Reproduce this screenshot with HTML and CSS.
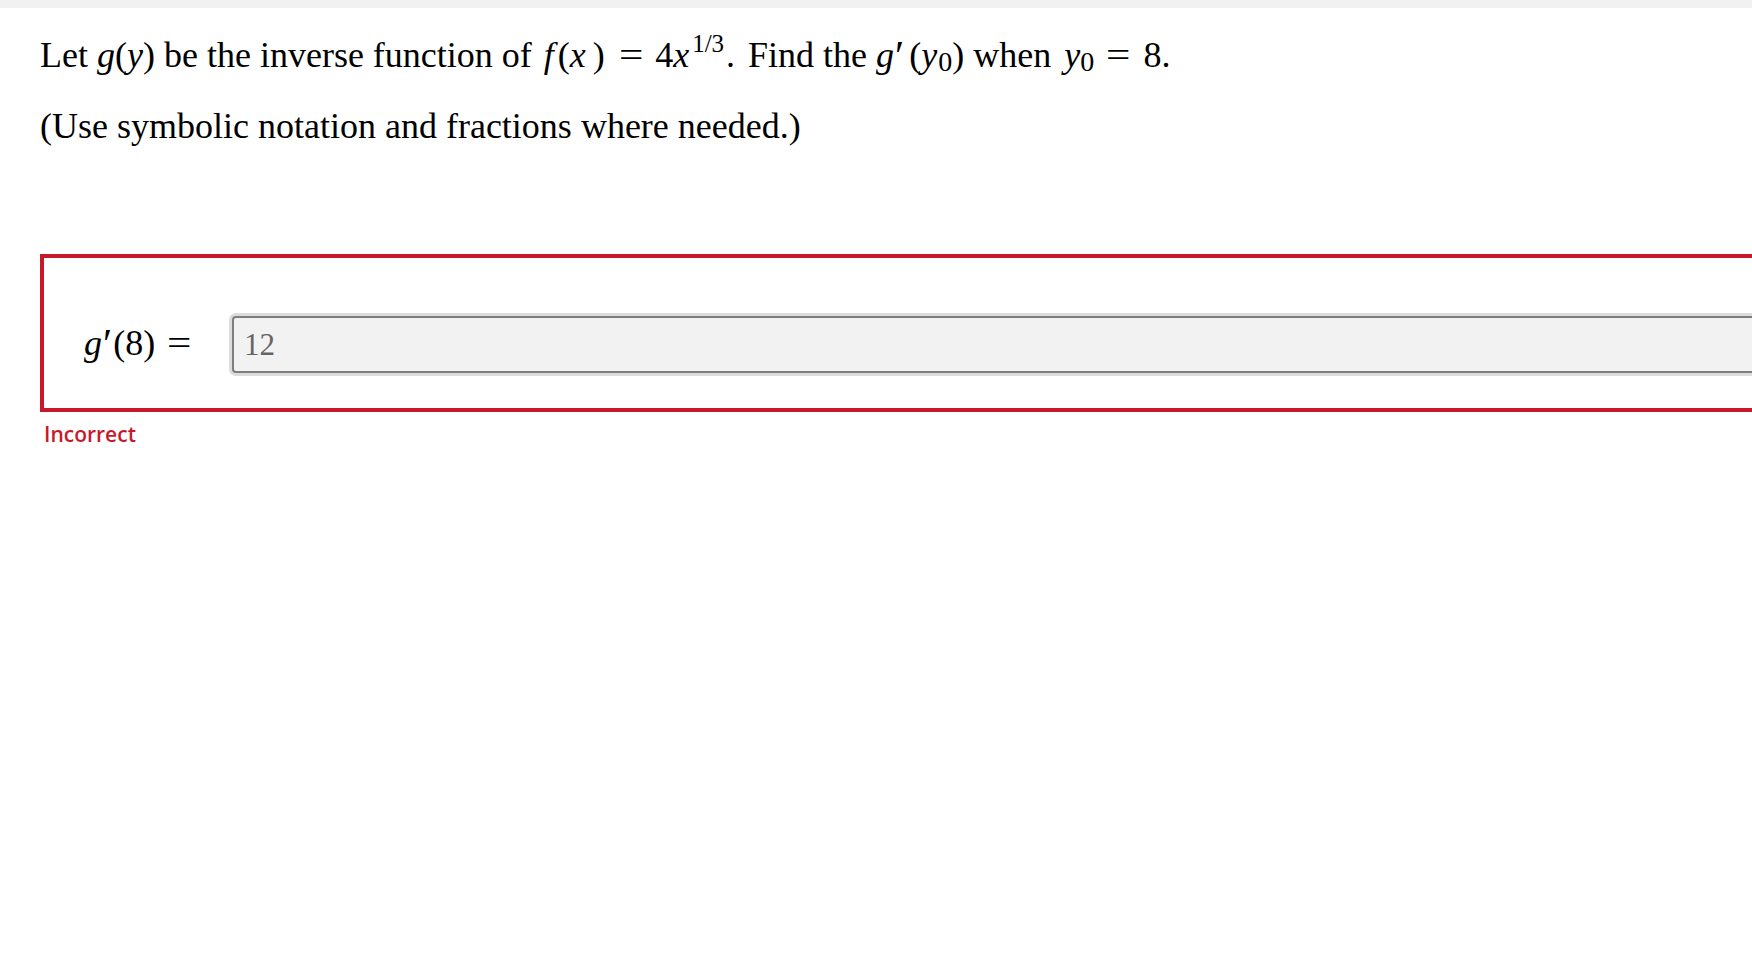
FILE: index.html
```html
<!DOCTYPE html>
<html lang="en">
<head>
<meta charset="utf-8">
<title>Inverse function derivative</title>
<link rel="stylesheet" href="styles.css">
</head>
<body>
<div class="topbar"></div>
<main class="question">
  <p class="line line-first">Let <i>g</i>(<i>y</i>) be the inverse function of <span class="math math-f"><i class="f">f</i><span class="par">(</span><i class="xin">x</i><span class="par">)</span><span class="eq">=</span>4<i class="x">x</i><sup class="sup">1/3</sup></span><span class="dot">.</span> Find the <span class="math math-g"><i>g</i><span class="prime">′</span><span class="par">(</span><i class="y">y</i><sub class="sub">0</sub><span class="par">)</span></span> when <span class="math math-y"><i>y</i><sub class="sub">0</sub><span class="eq eq-small">=</span>8</span>.</p>
  <p class="line line-second">(Use symbolic notation and fractions where needed.)</p>

  <section class="answer">
    <div class="answer-row">
      <div class="label"><i>g</i><span class="prime prime-label">′</span><span class="par">(</span>8<span class="par">)</span><span class="eq eq-label">=</span></div>
      <div class="input">12</div>
    </div>
  </section>
  <div class="status">Incorrect</div>
</main>
</body>
</html>
```

FILE: styles.css
```css
html, body {
  margin: 0;
  padding: 0;
  overflow: hidden;
  background: #ffffff;
}

body {
  font-family: "Liberation Serif", "Times New Roman", serif;
  color: #000000;
  width: 1752px;
  height: 963px;
}

.topbar {
  height: 8px;
  background: #f1f1f1;
}

.question {
  padding-left: 40px;
}

.line {
  margin: 0;
  font-size: 36px;
  line-height: 40px;
  white-space: nowrap;
}

.line-first {
  margin-top: 27px;
}

.line-second {
  margin-top: 31px;
}

.math i {
  font-style: italic;
}

.math-f {
  margin-left: 3px;
}

.math-g {
  margin-right: 0;
}

.math-y {
  margin-left: 4px;
}

.f {
  margin-right: 4px;
}

.xin {
  margin-right: 7px;
}

.x {
  margin-right: 3px;
}

.y {
  margin-right: 1px;
}

.par {
  font-style: normal;
}

.dot {
  margin-left: 2px;
  margin-right: 4px;
}

.eq {
  display: inline-block;
  margin: 0 14px 0 16px;
  transform: scaleX(1.2);
}

.eq-small {
  margin: 0 15px 0 14px;
}

.sup {
  font-size: 25px;
  line-height: 0;
  vertical-align: 15px;
}

.sub {
  font-size: 28px;
  line-height: 0;
  vertical-align: -4px;
}

.prime {
  display: inline-block;
  font-size: 42px;
  line-height: 0;
  vertical-align: -3px;
  margin: 0 5px 0 1px;
}

.prime-label {
  margin-right: 1px;
}

.answer {
  margin-top: 108px;
  width: 1800px;
  border: 4px solid #c8192b;
  box-sizing: border-box;
}

.answer-row {
  display: flex;
  align-items: baseline;
  padding: 58px 0 35px 40px;
}

.label {
  flex: 0 0 148px;
  font-size: 36px;
  line-height: 40px;
  white-space: nowrap;
}

.eq-label {
  margin: 0 0 0 14px;
}

.input {
  flex: 1 1 auto;
  height: 57px;
  box-sizing: border-box;
  border: 2px solid #7e7e7e;
  border-radius: 4px;
  box-shadow: 0 0 0 3px #dcdcdc;
  background: #f2f2f2;
  padding-left: 10px;
  font-size: 31px;
  line-height: 53px;
  color: #666666;
}

.status {
  margin: 8px 0 0 4px;
  font-family: "Open Sans", "Liberation Sans", sans-serif;
  font-weight: 600;
  font-size: 21px;
  line-height: 28px;
  color: #c8192b;
}
```
